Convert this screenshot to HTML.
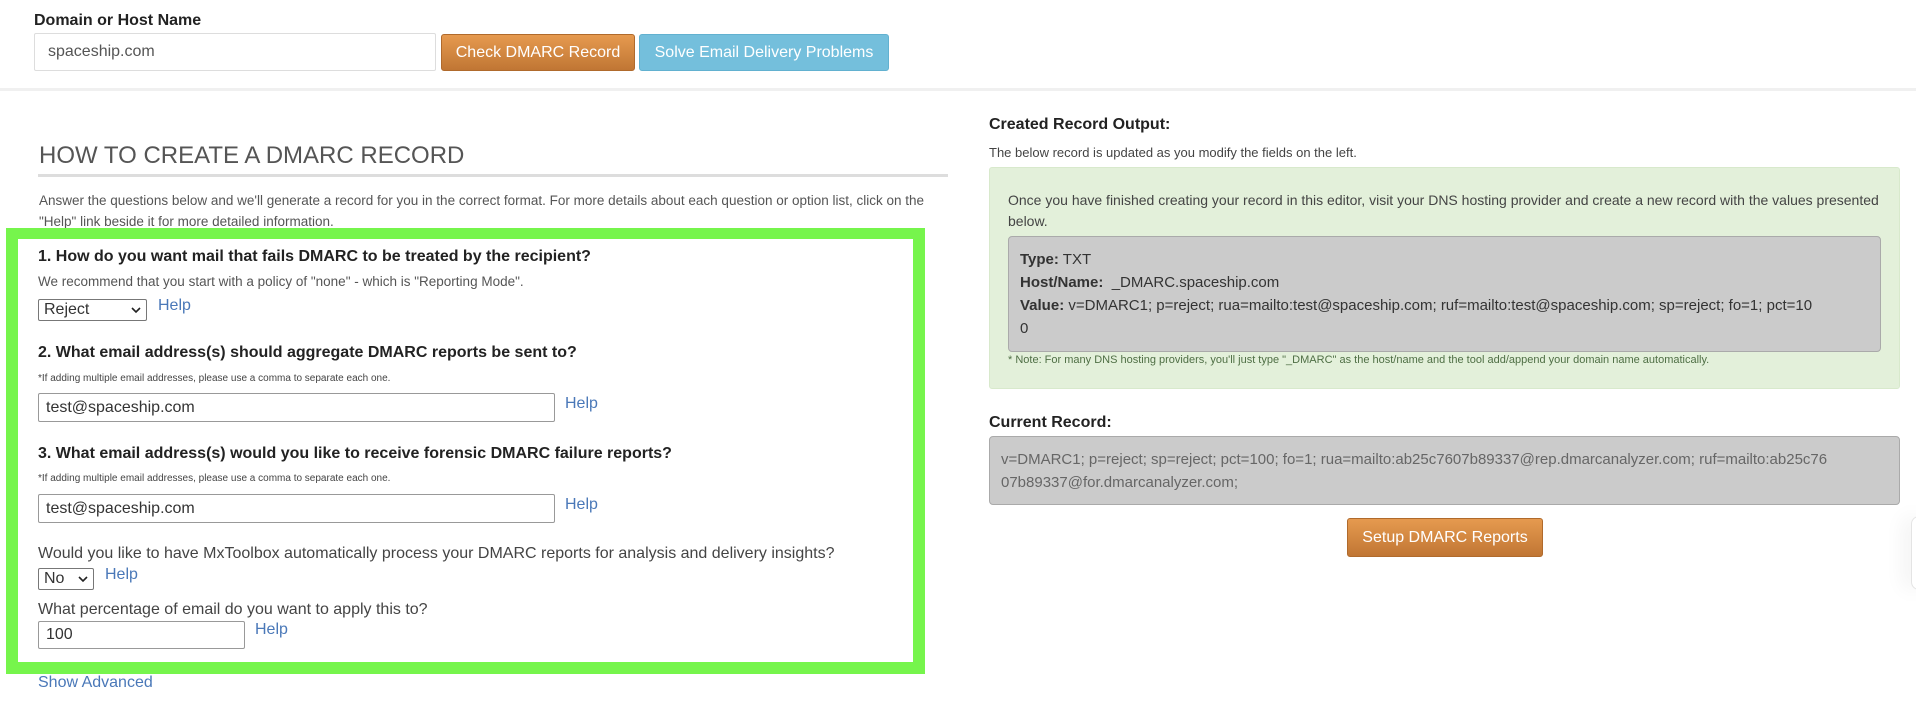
<!DOCTYPE html>
<html><head><meta charset="utf-8"><style>
*{box-sizing:border-box;margin:0;padding:0}
body{width:1916px;height:715px;overflow:hidden;background:#fff;font-family:"Liberation Sans",Arial,sans-serif;color:#333;position:relative}
.a{position:absolute;white-space:nowrap}
.b{font-weight:bold}
.help{color:#4a78b8;font-size:16px}
.inp{position:absolute;border:1px solid #aaa;border-radius:2px;background:#fff;font-size:16px;padding-left:7px;display:flex;align-items:center;color:#333}
.sel{position:absolute;border:1px solid #777;border-radius:2px;background:#fff;font-size:16px;padding-left:5px;display:flex;align-items:center}
.sel svg{position:absolute;right:5px;top:50%;margin-top:-3px}
.btn{position:absolute;color:#fff;font-size:16px;display:flex;align-items:center;justify-content:center;border-radius:3px}
.or{background:linear-gradient(#e69a4f,#c07634);border:1px solid #b06a2c}
.note{font-size:10px;color:#444}
</style></head><body>
<div class="a b" style="left:34px;top:12px;font-size:16px;color:#222">Domain or Host Name</div>
<div class="inp" style="left:34px;top:33px;width:402px;height:38px;border-color:#ddd;color:#555;padding-left:13px">spaceship.com</div>
<div class="btn or" style="left:441px;top:34px;width:194px;height:37px">Check DMARC Record</div>
<div class="btn" style="left:639px;top:34px;width:250px;height:37px;background:#74bfdc;border:1px solid #62b1d0">Solve Email Delivery Problems</div>
<div class="a" style="left:0;top:88px;width:1916px;height:3px;background:#f0f0f0"></div>

<div class="a" style="left:39px;top:142px;font-size:24px;color:#555">HOW TO CREATE A DMARC RECORD</div>
<div class="a" style="left:38px;top:174px;width:910px;height:3px;background:#ddd"></div>
<div class="a" style="left:39px;top:190px;font-size:13.5px;color:#555;line-height:21px">Answer the questions below and we'll generate a record for you in the correct format. For more details about each question or option list, click on the<br>"Help" link beside it for more detailed information.</div>

<div class="a" style="left:6px;top:228px;width:919px;height:446px;border:12px solid #76f54c;border-top-width:11px"></div>

<div class="a b" style="left:38px;top:248px;font-size:16px;color:#222">1. How do you want mail that fails DMARC to be treated by the recipient?</div>
<div class="a" style="left:38px;top:274px;font-size:13.5px;color:#555">We recommend that you start with a policy of "none" - which is "Reporting Mode".</div>
<div class="sel" style="left:38px;top:299px;width:109px;height:22px">Reject<svg width="10" height="7"><path d="M1 1l4 4 4-4" stroke="#222" stroke-width="1.6" fill="none"/></svg></div>
<div class="a help" style="left:158px;top:297px">Help</div>

<div class="a b" style="left:38px;top:344px;font-size:16px;color:#222">2. What email address(s) should aggregate DMARC reports be sent to?</div>
<div class="a note" style="left:38px;top:373px">*If adding multiple email addresses, please use a comma to separate each one.</div>
<div class="inp" style="left:38px;top:393px;width:517px;height:29px;border-color:#999">test@spaceship.com</div>
<div class="a help" style="left:565px;top:395px">Help</div>

<div class="a b" style="left:38px;top:445px;font-size:16px;color:#222">3. What email address(s) would you like to receive forensic DMARC failure reports?</div>
<div class="a note" style="left:38px;top:473px">*If adding multiple email addresses, please use a comma to separate each one.</div>
<div class="inp" style="left:38px;top:494px;width:517px;height:29px;border-color:#999">test@spaceship.com</div>
<div class="a help" style="left:565px;top:496px">Help</div>

<div class="a" style="left:38px;top:545px;font-size:16px;color:#444">Would you like to have MxToolbox automatically process your DMARC reports for analysis and delivery insights?</div>
<div class="sel" style="left:38px;top:568px;width:56px;height:22px">No<svg width="10" height="7"><path d="M1 1l4 4 4-4" stroke="#222" stroke-width="1.6" fill="none"/></svg></div>
<div class="a help" style="left:105px;top:566px">Help</div>
<div class="a" style="left:38px;top:601px;font-size:16px;color:#444">What percentage of email do you want to apply this to?</div>
<div class="inp" style="left:38px;top:621px;width:207px;height:28px;border-color:#999">100</div>
<div class="a help" style="left:255px;top:621px">Help</div>
<div class="a help" style="left:38px;top:674px">Show Advanced</div>

<div class="a b" style="left:989px;top:116px;font-size:16px;color:#222">Created Record Output:</div>
<div class="a" style="left:989px;top:145px;font-size:13px;color:#444">The below record is updated as you modify the fields on the left.</div>
<div class="a" style="left:989px;top:167px;width:911px;height:222px;background:#e3f0da;border:1px solid #d8e9cc;border-radius:3px"></div>
<div class="a" style="left:1008px;top:190px;font-size:14px;color:#444;line-height:21px">Once you have finished creating your record in this editor, visit your DNS hosting provider and create a new record with the values presented<br>below.</div>
<div class="a" style="left:1008px;top:236px;width:873px;height:116px;background:#cbcbcb;border:1px solid #aaa;border-radius:4px"></div>
<div class="a" style="left:1020px;top:248px;font-size:15px;line-height:23px;color:#333"><b>Type:</b> TXT<br><b>Host/Name:</b> &nbsp;_DMARC.spaceship.com<br><b>Value:</b> v=DMARC1; p=reject; rua=mailto:test@spaceship.com; ruf=mailto:test@spaceship.com; sp=reject; fo=1; pct=10<br>0</div>
<div class="a" style="left:1008px;top:354px;font-size:11px;color:#4f6f45">* Note: For many DNS hosting providers, you'll just type "_DMARC" as the host/name and the tool add/append your domain name automatically.</div>

<div class="a b" style="left:989px;top:414px;font-size:16px;color:#222">Current Record:</div>
<div class="a" style="left:989px;top:436px;width:911px;height:69px;background:#cbcbcb;border:1px solid #aaa;border-radius:4px"></div>
<div class="a" style="left:1001px;top:448px;font-size:15px;line-height:23px;color:#666">v=DMARC1; p=reject; sp=reject; pct=100; fo=1; rua=mailto:ab25c7607b89337@rep.dmarcanalyzer.com; ruf=mailto:ab25c76<br>07b89337@for.dmarcanalyzer.com;</div>
<div class="btn or" style="left:1347px;top:518px;width:196px;height:39px">Setup DMARC Reports</div>
<div class="a" style="left:1911px;top:516px;width:20px;height:74px;border:1px solid #e4e4e4;border-radius:8px;box-shadow:-8px 0 20px rgba(0,0,0,0.05)"></div>
</body></html>
